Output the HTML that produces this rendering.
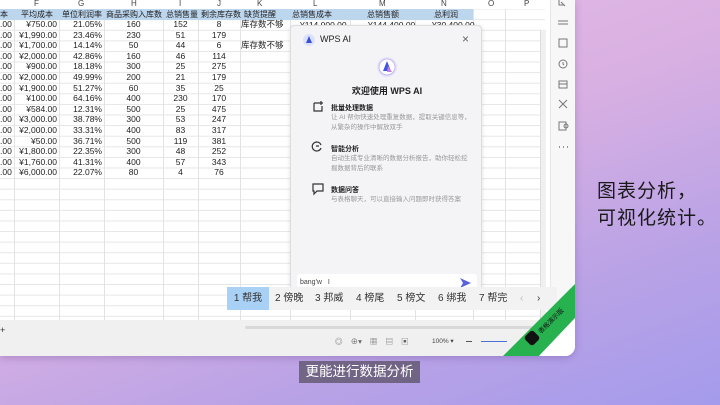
<!DOCTYPE html>
<html><head><meta charset="utf-8"><style>
*{margin:0;padding:0;box-sizing:border-box}
body{width:720px;height:405px;overflow:hidden;position:relative;font-family:"Liberation Sans","Noto Sans CJK SC",sans-serif;
background:linear-gradient(160deg,#e8bfe6 0%,#d9b0e2 45%,#b9a2e6 75%,#a49bec 100%);}
.win{position:absolute;left:0;top:0;width:575px;height:356px;background:#fff;border-radius:0 0 10px 0;overflow:hidden;box-shadow:0 2px 8px rgba(80,40,120,.25)}
.grid{position:absolute;left:0;top:0;width:545px;height:320px;
background-image:linear-gradient(#e6e6e6 1px,transparent 1px);background-size:100% 10.6px;background-position:0 8.6px}
.vl{position:absolute;top:0;height:320px;width:1px;background:#e3e3e3}
.letters{position:absolute;left:0;top:0;width:545px;height:9px;background:#fff;font-size:8px;color:#444;line-height:8px}
.hdr{position:absolute;left:0;top:9px;width:473px;height:11px;background:#bcd6ee;font-size:8px;color:#222;line-height:11px}
.t{position:absolute;font-size:8.5px;color:#222;white-space:nowrap;text-align:center}
.rows div{position:absolute;font-size:8.5px;color:#222;white-space:nowrap;line-height:10.6px}
.panel{position:absolute;left:290px;top:25px;width:192px;height:270px;background:#f4f4f7;border:1px solid #ddd;border-radius:4px;box-shadow:0 1px 5px rgba(0,0,0,.12)}
.side{position:absolute;left:550px;top:0;width:25px;height:320px;background:#f7f7f7;border-left:1px solid #e6e6e6}
.ime{position:absolute;left:227px;top:287px;width:330px;height:23px;background:#f2f2f2;font-size:10px;color:#333;line-height:23px;border-radius:2px}
.ime span{position:absolute;top:0}
.bottom{position:absolute;left:0;top:320px;width:575px;height:36px;background:#f0f0f0}
.sub{position:absolute;left:299px;top:361px;width:121px;height:22px;background:rgba(90,80,100,.75);color:#fff;font-size:13.5px;line-height:22px;text-align:center}
.big{position:absolute;left:597px;top:178px;font-size:19px;color:#1a1a1a;line-height:27px;letter-spacing:1px}
.ft{position:absolute;left:40px;font-size:7px;color:#222;font-weight:bold}
.fd{position:absolute;left:40px;font-size:6.5px;color:#999;line-height:10px;width:140px}
</style></head><body>
<div class="win">
 <div class="grid"></div>
 <div class="vl" style="left:14px"></div><div class="vl" style="left:59px"></div><div class="vl" style="left:104px"></div><div class="vl" style="left:163px"></div><div class="vl" style="left:198px"></div><div class="vl" style="left:240px"></div><div class="vl" style="left:290px"></div><div class="vl" style="left:350px"></div><div class="vl" style="left:415px"></div><div class="vl" style="left:473px"></div><div class="vl" style="left:505px"></div>
 <div class="letters">
  <span style="position:absolute;left:34px">F</span><span style="position:absolute;left:78px">G</span><span style="position:absolute;left:131px">H</span><span style="position:absolute;left:179px">I</span><span style="position:absolute;left:217px">J</span><span style="position:absolute;left:257px">K</span><span style="position:absolute;left:313px">L</span><span style="position:absolute;left:379px">M</span><span style="position:absolute;left:441px">N</span><span style="position:absolute;left:488px">O</span><span style="position:absolute;left:524px">P</span>
 </div>
 <div class="hdr">
  <span style="position:absolute;left:0">本</span><span style="position:absolute;left:21px">平均成本</span><span style="position:absolute;left:62px">单位利润率</span><span style="position:absolute;left:106px">商品采购入库数</span><span style="position:absolute;left:166px">总销售量</span><span style="position:absolute;left:201px">剩余库存数</span><span style="position:absolute;left:244px">缺货提醒</span><span style="position:absolute;left:292px">总销售成本</span><span style="position:absolute;left:367px">总销售额</span><span style="position:absolute;left:434px">总利润</span>
 </div>
 <div class="rows" id="rows"></div>
 <div class="t" style="left:300px;top:20px;font-size:8.5px">¥114,000.00</div>
 <div class="t" style="left:368px;top:20px;font-size:8.5px">¥144,400.00</div>
 <div class="t" style="left:432px;top:20px;font-size:8.5px">¥30,400.00</div>
 <div class="side">
  <svg width="25" height="160" viewBox="0 0 25 160" fill="none" stroke="#777" stroke-width="1">
   <path d="M8 0v5h5M10 2l4 4"/><path d="M7 21h10M7 24h10"/><rect x="8" y="39" width="8" height="8"/><circle cx="12" cy="64" r="4"/><path d="M12 62v2l1 1"/>
   <rect x="8" y="81" width="8" height="7"/><path d="M8 84h8"/><path d="M8 100l8 8M16 100l-8 8"/><rect x="8" y="122" width="7" height="8"/><circle cx="15" cy="126" r="2"/>
   <path d="M8 147h1M12 147h1M16 147h1" stroke-width="1.5"/>
  </svg>
 </div>
 <div style="position:absolute;left:540px;top:30px;width:6px;height:290px;background:#f0f0f0;border-left:1px solid #ddd"></div>
 <div class="panel">
  <svg style="position:absolute;left:12px;top:8px" width="12" height="12"><circle cx="6" cy="6" r="6" fill="#dbe1ff"/><path d="M6 2L3 9h6z" fill="#3a4fd8"/></svg>
  <div style="position:absolute;left:29px;top:8px;font-size:9px;color:#222">WPS AI</div>
  <div style="position:absolute;left:171px;top:6px;font-size:12px;color:#666">×</div>
  <svg style="position:absolute;left:85px;top:30px" width="22" height="22"><circle cx="11" cy="11" r="10" fill="#e5e3fb"/><circle cx="11" cy="11" r="8" fill="#fff" stroke="#c9b6f0"/><path d="M11 5L7 15h8z" fill="#4056e0"/><path d="M12 10l4 6h-5z" fill="#c17fe6"/></svg>
  <div style="position:absolute;left:0;width:192px;top:58px;text-align:center;font-size:9px;color:#222;font-weight:bold">欢迎使用 WPS AI</div>
  <div class="ft" style="top:77px">批量处理数据</div>
  <div class="fd" style="top:87px">让 AI 帮你快速处理重复数据，提取关键信息等，从繁杂的操作中解放双手</div>
  <div class="ft" style="top:118px">智能分析</div>
  <div class="fd" style="top:128px">自动生成专业清晰的数据分析报告，助你轻松挖掘数据背后的联系</div>
  <div class="ft" style="top:159px">数据问答</div>
  <div class="fd" style="top:169px;width:150px">与表格聊天，可以直接输入问题即时获得答案</div>
  <svg style="position:absolute;left:20px;top:74px" width="14" height="110" fill="none" stroke="#333" stroke-width="1.2"><path d="M3 3h6M3 3v8h8V6M10 1v4M8 3h4"/><path d="M10 45a4.5 4.5 0 1 0 0 3M5 46h3"/><path d="M2 84h10v7H6l-3 3v-3H2z"/></svg>
  <div style="position:absolute;left:6px;top:248px;width:180px;height:18px;background:#fff;border-radius:3px;font-size:7px;color:#444;line-height:18px;padding-left:3px">bang'w <span style="margin-left:4px">I</span></div>
  <svg style="position:absolute;left:169px;top:252px" width="11" height="10"><path d="M0 0l11 5-11 5 3-5z" fill="#5b63d8"/></svg>
 </div>
 <div class="bottom">
  <div style="position:absolute;left:0;top:5px;font-size:9px;color:#333">+</div>
  <div style="position:absolute;left:245px;top:6px;width:290px;height:3px;background:#d9d9d9;border-radius:2px"></div>
  <div style="position:absolute;left:335px;top:16px;font-size:7.5px;color:#666;word-spacing:6px">◎ ⊕▾ ▦ ▤ ▣</div>
  <div style="position:absolute;left:432px;top:17px;font-size:6.5px;color:#444">100% ▾</div>
  <div style="position:absolute;left:466px;top:21px;width:6px;height:1px;background:#555"></div>
  <div style="position:absolute;left:481px;top:21px;width:26px;height:1px;background:#4a72d8"></div>
 </div>
 <div class="ime">
  <span style="left:0;width:42px;background:#a9d0f5;text-align:center">1 帮我</span>
  <span style="left:48px">2 傍晚</span><span style="left:88px">3 邦威</span><span style="left:129px">4 榜尾</span><span style="left:170px">5 榜文</span><span style="left:211px">6 绑我</span><span style="left:252px">7 帮完</span><span style="left:293px;color:#bbb">‹</span><span style="left:310px">›</span>
 </div>
 <svg style="position:absolute;left:495px;top:280px" width="80" height="76"><polygon points="80,4 80,38 44,76 8,76" fill="#27b24f"/><polygon points="80,38 80,76 44,76" fill="#fff"/>
  <rect x="31" y="52" width="12" height="12" rx="3" fill="#111" transform="rotate(-45 37 58)"/>
  <text x="0" y="0" font-size="6.5" fill="#111" transform="translate(46 54) rotate(-45)" font-family="Liberation Sans,Noto Sans CJK SC,sans-serif">表格演示版</text>
 </svg>
</div>
<div class="sub">更能进行数据分析</div>
<div class="big">图表分析，<br>可视化统计。</div>
<script>
var d=[["¥750.00","21.05%","160","152","8","库存数不够"],["¥1,990.00","23.46%","230","51","179",""],["¥1,700.00","14.14%","50","44","6","库存数不够"],["¥2,000.00","42.86%","160","46","114",""],["¥900.00","18.18%","300","25","275",""],["¥2,000.00","49.99%","200","21","179",""],["¥1,900.00","51.27%","60","35","25",""],["¥100.00","64.16%","400","230","170",""],["¥584.00","12.31%","500","25","475",""],["¥3,000.00","38.78%","300","53","247",""],["¥2,000.00","33.31%","400","83","317",""],["¥50.00","36.71%","500","119","381",""],["¥1,800.00","22.35%","300","48","252",""],["¥1,760.00","41.31%","400","57","343",""],["¥6,000.00","22.07%","80","4","76",""]];
var h="";d.forEach(function(r,i){var y=19+i*10.6;
h+='<div style="left:0;top:'+y+'px">.00</div>';
h+='<div style="left:0;width:57px;text-align:right;top:'+y+'px">'+r[0]+'</div>';
h+='<div style="left:59px;width:43px;text-align:right;top:'+y+'px">'+r[1]+'</div>';
h+='<div style="left:104px;width:59px;text-align:center;top:'+y+'px">'+r[2]+'</div>';
h+='<div style="left:163px;width:35px;text-align:center;top:'+y+'px">'+r[3]+'</div>';
h+='<div style="left:198px;width:42px;text-align:center;top:'+y+'px">'+r[4]+'</div>';
if(r[5])h+='<div style="left:241px;top:'+y+'px">'+r[5]+'</div>';});
document.getElementById("rows").innerHTML=h;
</script>
</body></html>
